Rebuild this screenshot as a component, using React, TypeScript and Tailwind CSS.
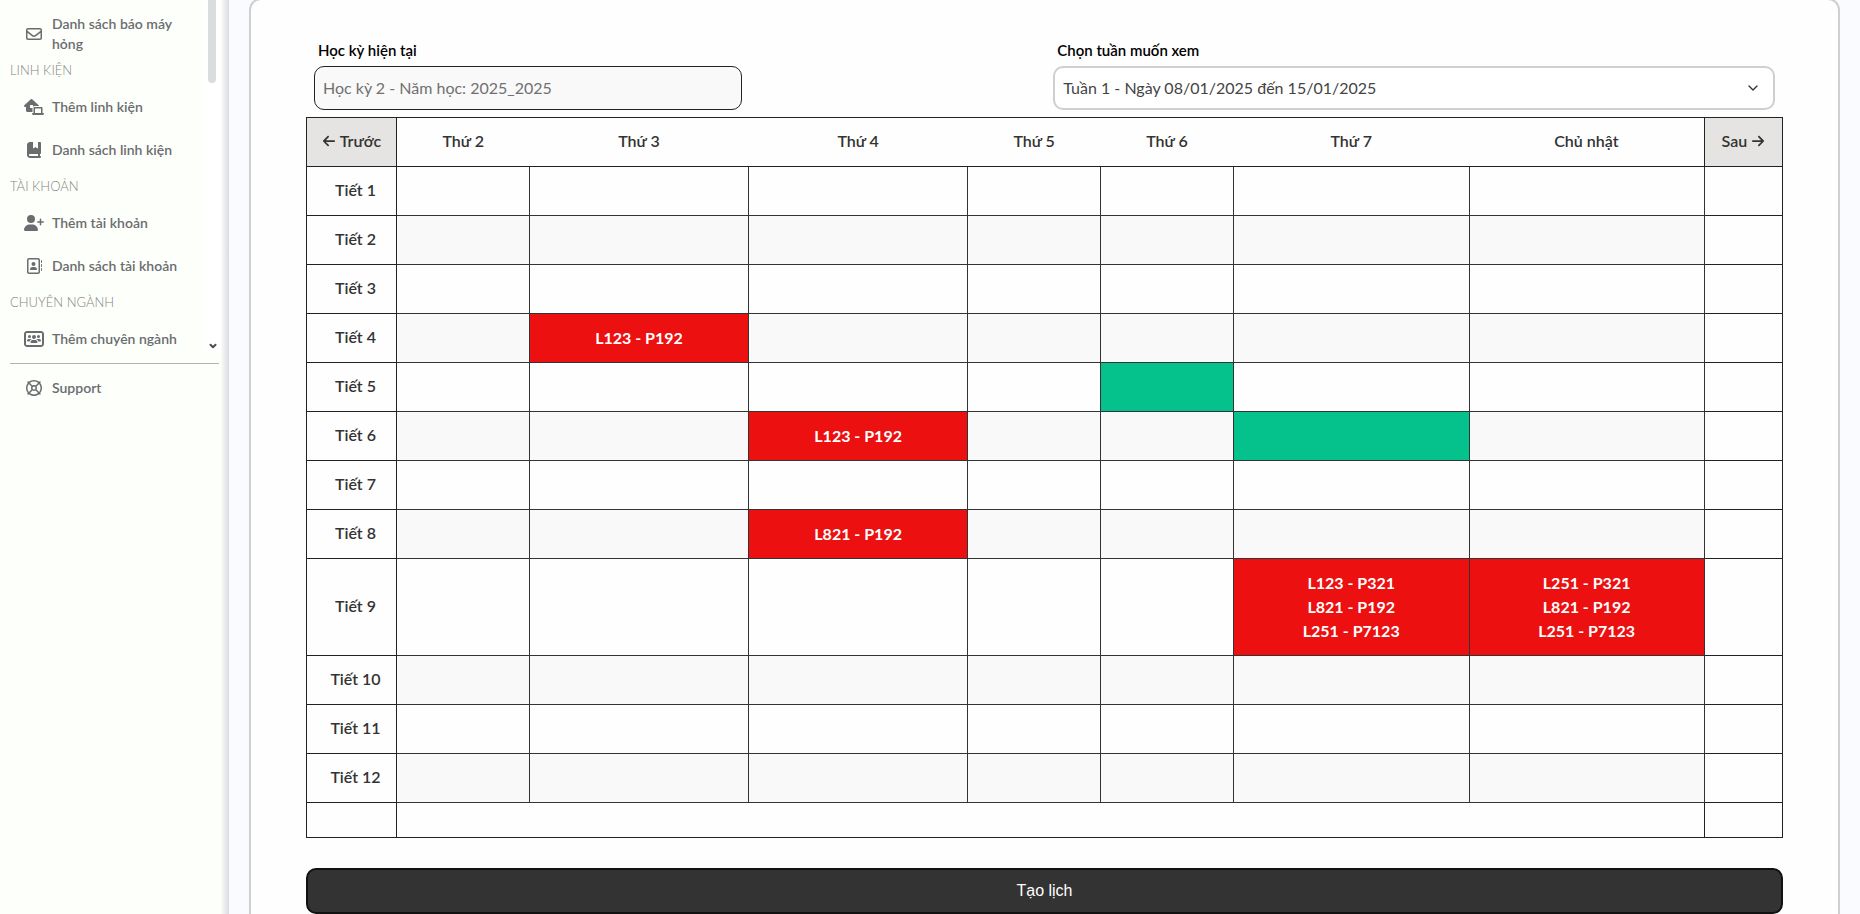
import type { ReactNode } from "react";
import {
  FaArrowLeft,
  FaArrowRight,
  FaBookBookmark,
  FaHouseLaptop,
  FaRegAddressBook,
  FaRegEnvelope,
  FaRegLifeRing,
  FaUserPlus,
  FaUsersRectangle,
} from "react-icons/fa6";
import { ChevronDown } from "lucide-react";

type Status = "busy" | "free";
type Slot = { status: Status; lines: string[] };

const days = ["Thứ 2", "Thứ 3", "Thứ 4", "Thứ 5", "Thứ 6", "Thứ 7", "Chủ nhật"];
const periods = Array.from({ length: 12 }, (_, i) => i + 1);

// Keys are "period-dayIndex".
const slots: Record<string, Slot> = {
  "4-1": { status: "busy", lines: ["L123 - P192"] },
  "5-4": { status: "free", lines: [] },
  "6-2": { status: "busy", lines: ["L123 - P192"] },
  "6-5": { status: "free", lines: [] },
  "8-2": { status: "busy", lines: ["L821 - P192"] },
  "9-5": { status: "busy", lines: ["L123 - P321", "L821 - P192", "L251 - P7123"] },
  "9-6": { status: "busy", lines: ["L251 - P321", "L821 - P192", "L251 - P7123"] },
};

function NavItem({ icon, children }: { icon: ReactNode; children: ReactNode }) {
  return (
    <a href="#" className="flex min-h-[43px] items-center pl-6 text-sm leading-5 font-semibold text-[#6b6c70]">
      <span className="flex w-5 shrink-0 justify-center text-base">{icon}</span>
      <span className="ml-2">{children}</span>
    </a>
  );
}

function NavHeading({ children }: { children: ReactNode }) {
  return <h2 className="pl-2.5 text-[13px] leading-[30px] font-light text-[#858585]">{children}</h2>;
}

function Sidebar() {
  return (
    <aside className="flex w-[229px] shrink-0">
      <div className="flex-1 bg-[#fdfffa]">
        <div className="flex h-[353px]">
          <nav className="flex-1 pt-3">
            <NavItem icon={<FaRegEnvelope />}>Danh sách báo máy hỏng</NavItem>
            <NavHeading>LINH KIỆN</NavHeading>
            <NavItem icon={<FaHouseLaptop className="size-5" />}>Thêm linh kiện</NavItem>
            <NavItem icon={<FaBookBookmark />}>Danh sách linh kiện</NavItem>
            <NavHeading>TÀI KHOẢN</NavHeading>
            <NavItem icon={<FaUserPlus className="size-5" />}>Thêm tài khoản</NavItem>
            <NavItem icon={<FaRegAddressBook />}>Danh sách tài khoản</NavItem>
            <NavHeading>CHUYÊN NGÀNH</NavHeading>
            <NavItem icon={<FaUsersRectangle className="size-5" />}>Thêm chuyên ngành</NavItem>
          </nav>
          <div className="flex w-4 flex-col items-start justify-between bg-white pl-[3px]">
            <div className="h-[83px] w-2 rounded-b bg-[#dadddd]" />
            <ChevronDown className="mb-0.5 size-2.5 text-[#505050]" strokeWidth={5} />
          </div>
        </div>
        <hr className="mt-2.5 mr-0.5 ml-2.5 border-[#b4b4b4]" />
        <div className="pt-0.5">
          <NavItem icon={<FaRegLifeRing />}>Support</NavItem>
        </div>
      </div>
      <div className="w-2 bg-linear-to-r from-[#fbfcf9] to-[#d9dce0]" />
    </aside>
  );
}

function ScheduleCell({ slot, shaded }: { slot?: Slot; shaded: boolean }) {
  if (!slot) return <td className={shaded ? "border border-[#333] bg-[#f9f9f9]" : "border border-[#333]"} />;
  return (
    <td
      className={
        slot.status === "busy"
          ? "border border-[#333] bg-[#ec1010] py-3 text-center font-bold text-white"
          : "border border-[#333] bg-[#05c28c]"
      }
    >
      {slot.lines.map((line) => (
        <div key={line}>{line}</div>
      ))}
    </td>
  );
}

function Schedule() {
  return (
    <table className="mt-[7px] w-full table-fixed border-collapse border border-[#222] text-base leading-6 text-[#333]">
      <colgroup>
        <col className="w-[6.1%]" />
        <col className="w-[9%]" />
        <col className="w-[14.85%]" />
        <col className="w-[14.85%]" />
        <col className="w-[9%]" />
        <col className="w-[9%]" />
        <col className="w-[15.97%]" />
        <col className="w-[15.93%]" />
        <col className="w-[5.3%]" />
      </colgroup>
      <thead>
        <tr className="h-[49px]">
          <th className="border border-[#222] bg-[#e5e4e2] pb-0.5 font-semibold">
            <button type="button" className="inline-flex items-center gap-1">
              <FaArrowLeft className="size-3.5" /> Trước
            </button>
          </th>
          {days.map((day) => (
            <th key={day} className="border-b border-[#222] pb-0.5 font-semibold">
              {day}
            </th>
          ))}
          <th className="border border-[#222] bg-[#e5e4e2] pb-0.5 font-semibold">
            <button type="button" className="inline-flex items-center gap-1">
              Sau <FaArrowRight className="size-3.5" />
            </button>
          </th>
        </tr>
      </thead>
      <tbody>
        {periods.map((period) => (
          <tr key={period} className="h-[49px]">
            <th className="border border-[#222] pb-0.5 pl-2 font-semibold">Tiết {period}</th>
            {days.map((day, i) => (
              <ScheduleCell key={day} slot={slots[`${period}-${i}`]} shaded={period % 2 === 0} />
            ))}
            <td className="border border-[#222]" />
          </tr>
        ))}
      </tbody>
      <tfoot>
        <tr className="h-[35px]">
          <td className="border border-[#222]" />
          <td colSpan={7} className="border border-[#222]" />
          <td className="border border-[#222]" />
        </tr>
      </tfoot>
    </table>
  );
}

export default function App() {
  return (
    <div className="flex h-screen overflow-hidden bg-[#fafbfe] font-[Lato,'Open_Sans',sans-serif]">
      <Sidebar />
      <main className="min-w-0 flex-1 px-5">
        <section className="-mt-0.5 rounded-xl border-2 border-[#cfd0d1] bg-[#fefefe] px-[55px] pt-10 pb-10">
          <div className="flex justify-between px-2">
            <div className="w-[29.3%]">
              <label htmlFor="semester" className="block pl-1 text-[15px] leading-5 font-semibold text-black">
                Học kỳ hiện tại
              </label>
              <input
                id="semester"
                readOnly
                defaultValue="Học kỳ 2 - Năm học: 2025_2025"
                className="mt-1.5 block h-11 w-full rounded-[10px] border border-[#222] bg-[#f9f9f9] px-2 pb-0.5 text-base text-[#707070]"
              />
            </div>
            <div className="w-[49.4%]">
              <label htmlFor="week" className="block pl-1 text-[15px] leading-5 font-semibold text-black">
                Chọn tuần muốn xem
              </label>
              <div className="relative mt-1.5">
                <select
                  id="week"
                  className="block h-11 w-full appearance-none rounded-[10px] border-2 border-[#cfcfcf] bg-white px-2 text-base text-[#444]"
                >
                  <option>Tuần 1 - Ngày 08/01/2025 đến 15/01/2025</option>
                </select>
                <ChevronDown className="pointer-events-none absolute top-3.5 right-3.5 size-4 text-[#333]" />
              </div>
            </div>
          </div>
          <Schedule />
          <button
            type="button"
            className="mt-[30px] h-[46px] w-full rounded-[10px] border-2 border-[#111] bg-[#333] font-['Liberation_Sans',Arial,sans-serif] text-base text-white"
          >
            Tạo lịch
          </button>
        </section>
      </main>
    </div>
  );
}
